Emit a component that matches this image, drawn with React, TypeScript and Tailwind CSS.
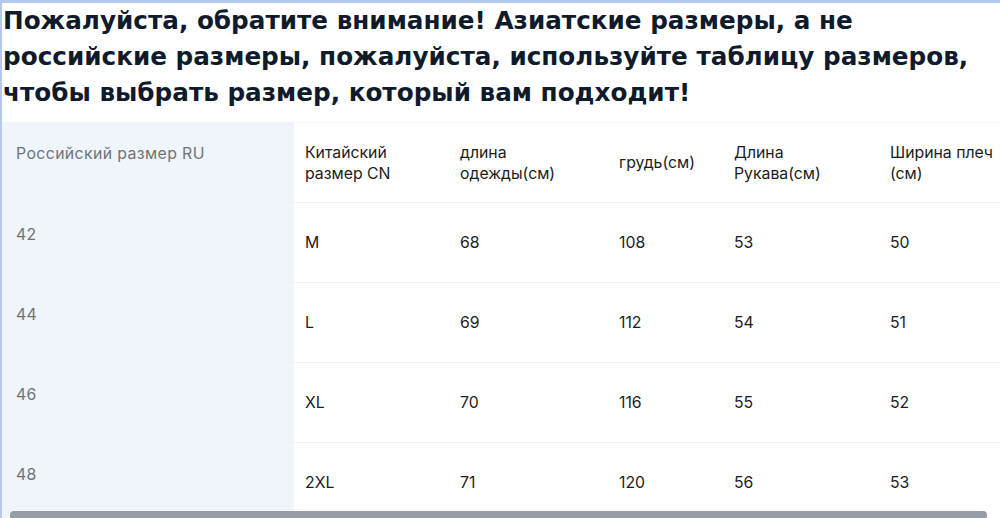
import React from "react";

const rows = [
  ["42", "M", "68", "108", "53", "50"],
  ["44", "L", "69", "112", "54", "51"],
  ["46", "XL", "70", "116", "55", "52"],
  ["48", "2XL", "71", "120", "56", "53"],
];

export default function App() {
  return (
    <div
      className="w-[1000px] h-[518px] overflow-hidden bg-white border-t-[3px] border-l-[2px] border-[#b4c9ee] flex flex-col"
      style={{ fontFamily: "Inter, 'Noto Sans', sans-serif" }}
    >
      <h1
        className="text-[24.7px] leading-[36px] font-bold text-[#0f1b2b] pl-[1px] whitespace-nowrap h-[119px]"
        style={{ fontFamily: "'DejaVu Sans', 'Noto Sans', sans-serif" }}
      >
        Пожалуйста, обратите внимание! Азиатские размеры, а не
        <br />
        российские размеры, пожалуйста, используйте таблицу размеров,
        <br />
        чтобы выбрать размер, который вам подходит!
      </h1>
      <div className="flex-1 overflow-hidden relative">
        <table className="border-collapse text-[15.8px] leading-[21px] text-[#1c1c1c] w-[1060px] table-fixed">
          <colgroup>
            <col className="w-[292px]" />
            <col className="w-[155px]" />
            <col className="w-[159px]" />
            <col className="w-[115px]" />
            <col className="w-[156px]" />
            <col className="w-[183px]" />
          </colgroup>
          <tbody>
            <tr className="h-[80px] border-t border-[#f2f4f7]">
              <td className="align-top bg-[#f0f4fb] text-[#6e7379] pl-[14px] pt-[20px] tracking-[0.4px]">
                Российский размер RU
              </td>
              <td className="align-middle px-[11px] whitespace-nowrap">
                Китайский
                <br />
                размер CN
              </td>
              <td className="align-middle px-[11px] whitespace-nowrap">
                длина
                <br />
                одежды(см)
              </td>
              <td className="align-middle px-[11px] whitespace-nowrap">грудь(см)</td>
              <td className="align-middle px-[11px] whitespace-nowrap">
                Длина
                <br />
                Рукава(см)
              </td>
              <td className="align-middle px-[11px] whitespace-nowrap">
                Ширина плеч
                <br />
                (см)
              </td>
            </tr>
            {rows.map((r) => (
              <tr key={r[0]} className="h-[80px] border-t border-[#f0f2f5]">
                <td className="align-top bg-[#f0f4fb] text-[#6e7379] pl-[14px] pt-[21px] tracking-[0.4px]">
                  {r[0]}
                </td>
                {r.slice(1).map((c, i) => (
                  <td key={i} className="align-middle px-[11px]">
                    {c}
                  </td>
                ))}
              </tr>
            ))}
          </tbody>
        </table>
        <div className="absolute left-[8px] bottom-0 w-[977px] h-[7px] rounded-t-[4px] bg-[#979da4]" />
      </div>
    </div>
  );
}
